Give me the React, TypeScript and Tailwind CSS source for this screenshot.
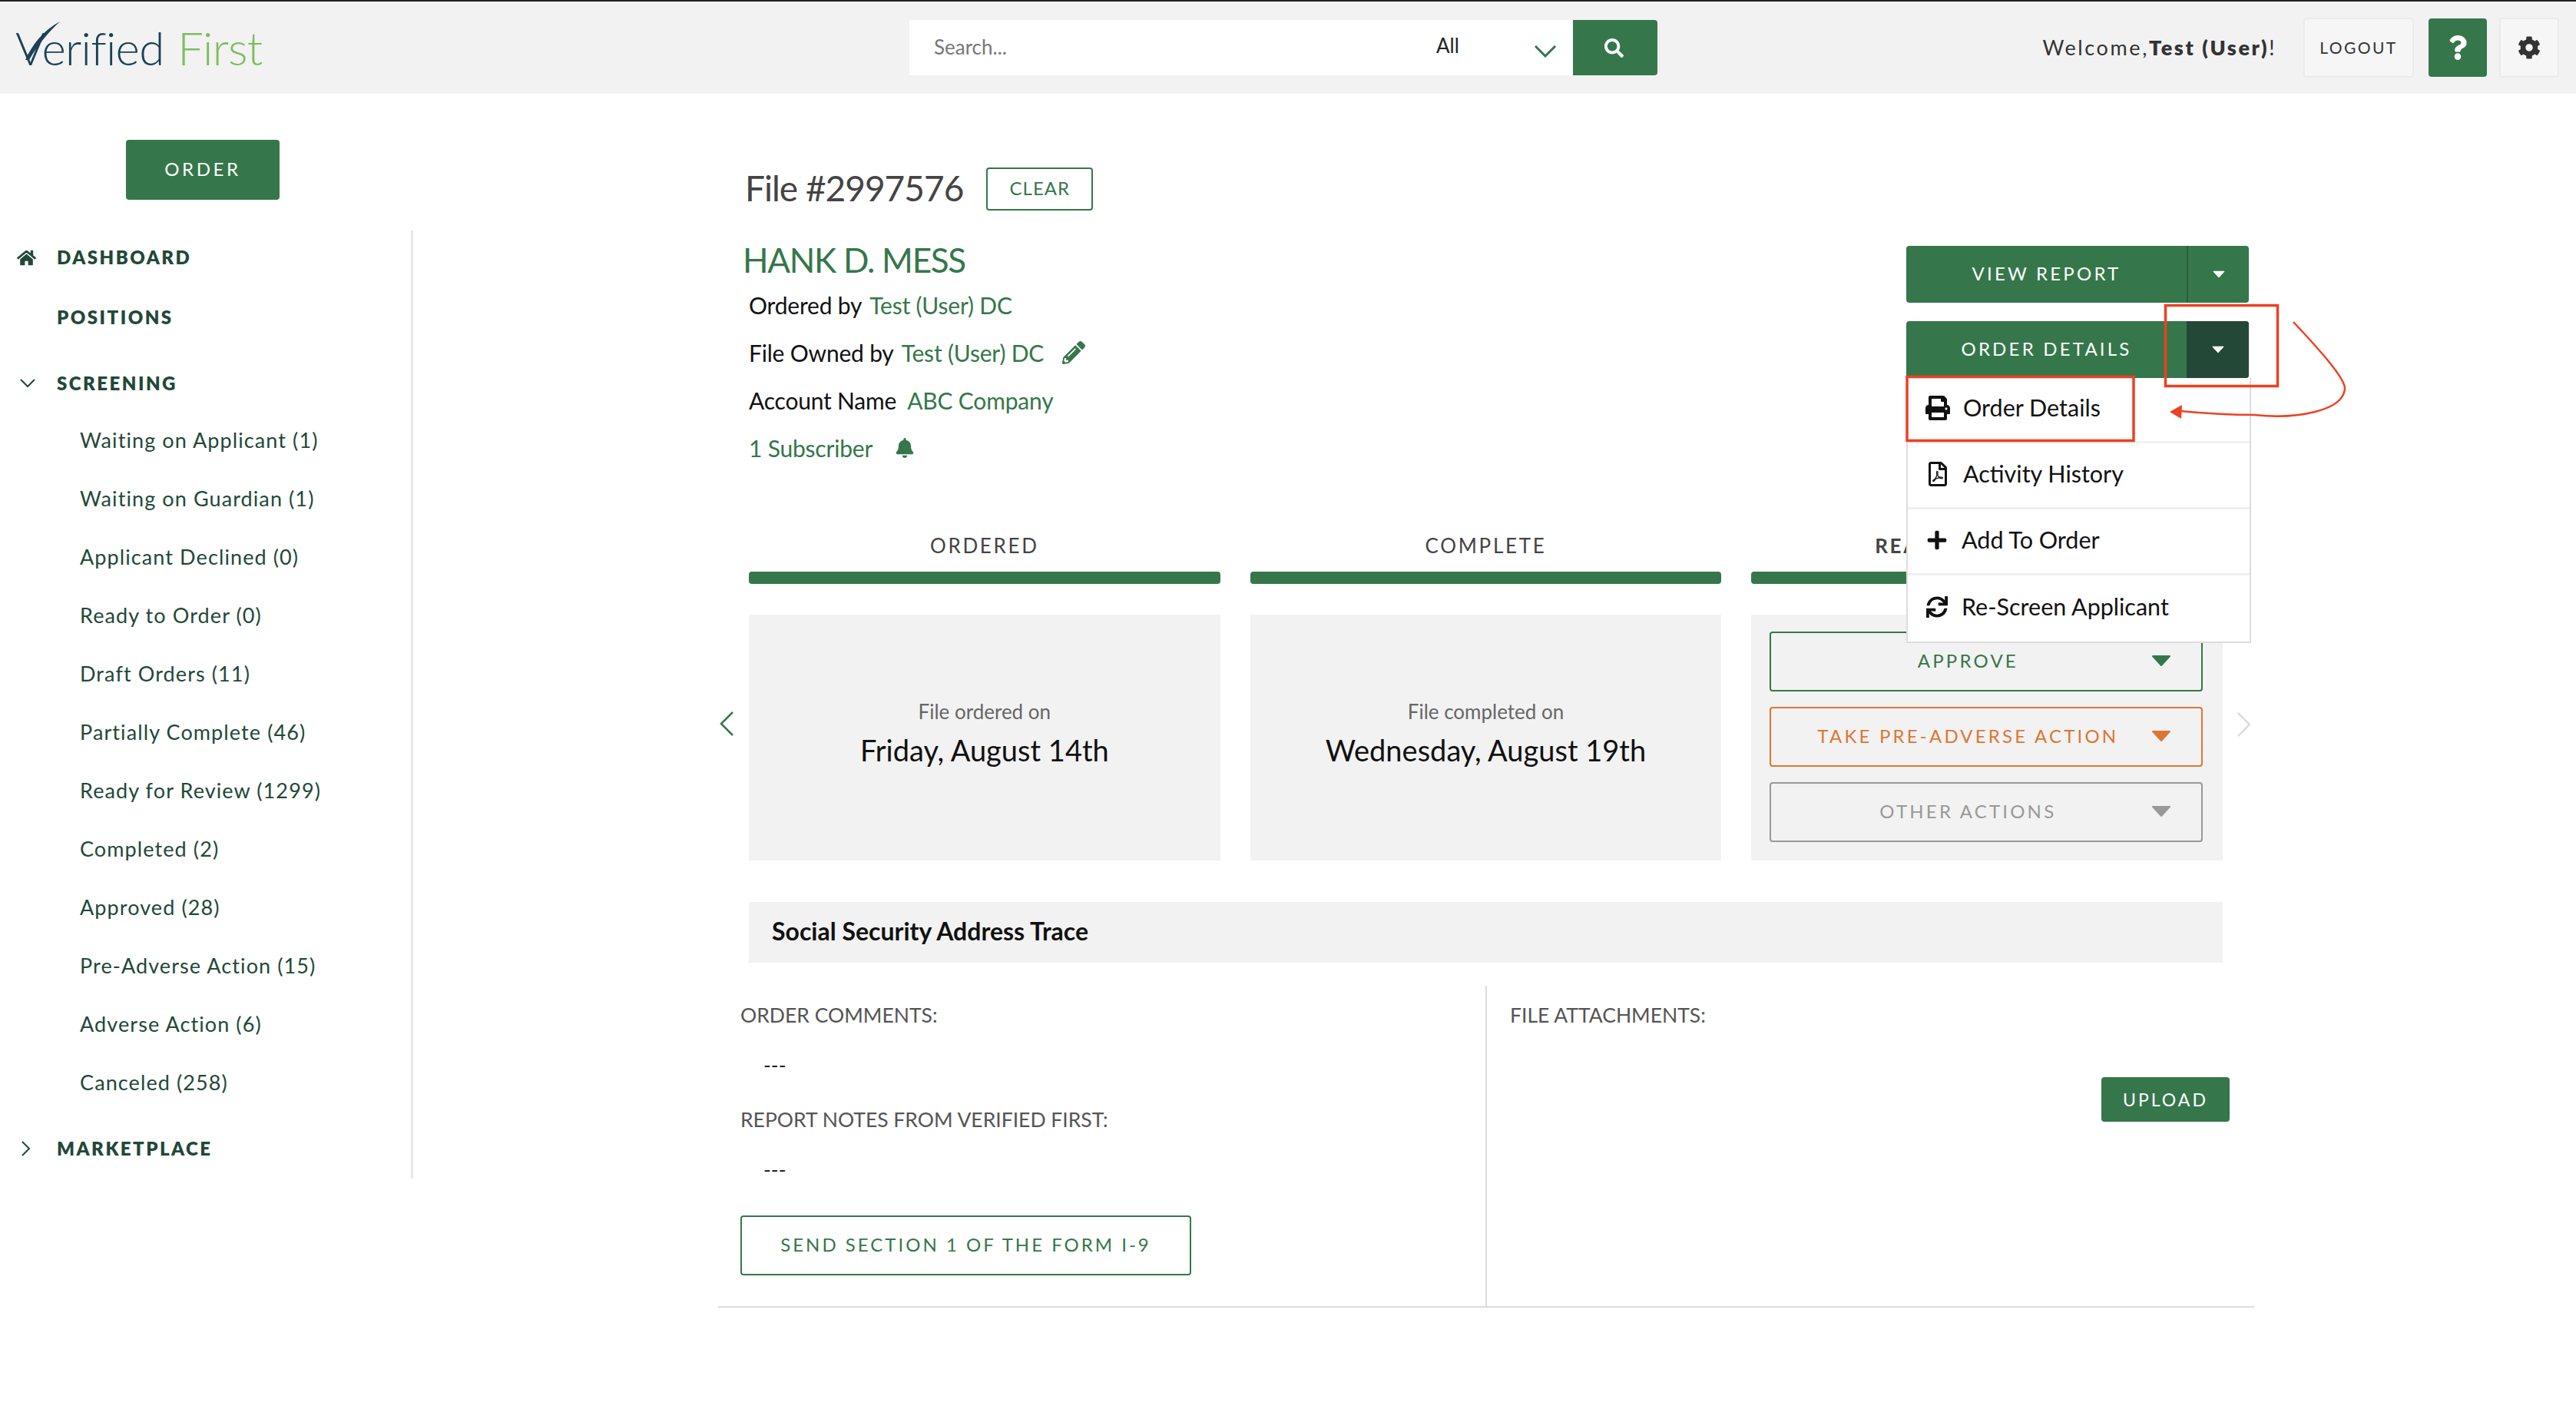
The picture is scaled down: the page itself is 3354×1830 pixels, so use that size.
import { FaBell, FaCog, FaHome, FaPencilAlt, FaPlus, FaPrint, FaQuestion, FaRegFilePdf, FaSearch, FaSync } from 'react-icons/fa'

const screening = [
  'Waiting on Applicant (1)',
  'Waiting on Guardian (1)',
  'Applicant Declined (0)',
  'Ready to Order (0)',
  'Draft Orders (11)',
  'Partially Complete (46)',
  'Ready for Review (1299)',
  'Completed (2)',
  'Approved (28)',
  'Pre-Adverse Action (15)',
  'Adverse Action (6)',
  'Canceled (258)',
]

function Caret({ className }: { className: string }) {
  return (
    <svg viewBox="0 0 26 16" className={className} fill="currentColor" stroke="currentColor" strokeWidth="2" strokeLinejoin="round">
      <path d="M2 2h22L13 14z" />
    </svg>
  )
}

function Header() {
  return (
    <header className="flex h-[122px] items-center border-t-2 border-[#222222] bg-[#f2f2f2]">
      <div className="relative w-[1184px] pl-[20px]">
        <span className="text-[60px] leading-none font-light tracking-[-0.7px] text-[#1a4158]">
          Verified <span className="ml-[2px] text-[#7dbd5f]">First</span>
        </span>
        <svg viewBox="0 0 60 50" className="absolute top-[-4px] left-[26px] h-[50px] w-[60px]">
          <path d="M7 50C16 30 30 12 52 0 36 15 22 32 12 50z" fill="#1a4158" />
        </svg>
      </div>
      <div className="flex h-[72px] w-[974px] items-stretch">
        <div className="flex w-[864px] items-center bg-white pr-[22px] pl-[32px]">
          <span className="mb-[2px] flex-1 text-[26px] text-[#777777]">Search...</span>
          <span className="mb-[6px] w-[128px] text-[26px] text-[#222222]">All</span>
          <svg viewBox="0 0 28 16" className="mt-[10px] h-[16px] w-[28px]" fill="none" stroke="#35774a" strokeWidth="3">
            <path d="M1 1l13 13L27 1" />
          </svg>
        </div>
        <button className="flex w-[110px] items-center justify-center rounded-r-[4px] bg-[#35774a] pr-[4px] text-white">
          <FaSearch className="size-[25px]" />
        </button>
      </div>
      <span className="ml-auto text-[27px] tracking-[2.6px] text-[#333333]">
        Welcome,<b className="font-extrabold">Test (User)</b>!
      </span>
      <div className="mr-[22px] ml-[35px] flex items-center">
        <button className="h-[78px] w-[144px] rounded-[4px] border-2 border-[#ebebeb] bg-[#f6f6f6] text-[21px] tracking-[2.4px] text-[#333333]">
          LOGOUT
        </button>
        <button className="ml-[19px] flex h-[76px] w-[76px] items-center justify-center rounded-[4px] bg-[#35774a] text-white">
          <FaQuestion className="size-[32px]" />
        </button>
        <button className="ml-[16px] flex h-[78px] w-[78px] items-center justify-center rounded-[4px] border-2 border-[#ebebeb] bg-[#f6f6f6] text-[#333333]">
          <FaCog className="size-[30px]" />
        </button>
      </div>
    </header>
  )
}

function Sidebar() {
  return (
    <aside className="w-[538px] shrink-0">
      <button className="mt-[60px] ml-[164px] h-[78px] w-[200px] rounded-[4px] bg-[#35774a] pb-[3px] text-[24px] tracking-[3.6px] text-white">
        ORDER
      </button>
      <nav className="mt-[40px] border-r-[3px] border-[#e8e8e8] pt-[15px] pb-[19px] text-[#224838]">
        <div className="flex h-[40px] items-center text-[24px] font-extrabold tracking-[2.5px]">
          <span className="w-[74px] pl-[22px]">
            <FaHome className="size-[25px]" />
          </span>
          DASHBOARD
        </div>
        <div className="mt-[38px] flex h-[40px] items-center pl-[74px] text-[24px] font-extrabold tracking-[2.5px]">POSITIONS</div>
        <div className="mt-[46px] flex h-[40px] items-center text-[24px] font-extrabold tracking-[2.5px]">
          <span className="w-[74px] pl-[26px]">
            <svg viewBox="0 0 20 12" className="h-[12px] w-[20px]" fill="none" stroke="currentColor" strokeWidth="2">
              <path d="M1 1l9 9 9-9" />
            </svg>
          </span>
          SCREENING
        </div>
        <ul className="mt-[16px]">
          {screening.map((item) => (
            <li key={item} className="flex h-[76px] items-center pl-[104px] text-[27px] tracking-[1.1px]">
              {item}
            </li>
          ))}
        </ul>
        <div className="mt-[28px] flex h-[40px] items-center text-[24px] font-extrabold tracking-[2.5px]">
          <span className="w-[74px] pl-[28px]">
            <svg viewBox="0 0 12 20" className="h-[20px] w-[12px]" fill="none" stroke="currentColor" strokeWidth="2">
              <path d="M1 1l9 9-9 9" />
            </svg>
          </span>
          MARKETPLACE
        </div>
      </nav>
    </aside>
  )
}

function ActionMenu() {
  return (
    <div className="absolute top-full left-0 z-10 w-[449px] border-2 border-t-0 border-[#dddddd] bg-white text-[30.5px] tracking-normal text-[#111111]">
      <div className="flex h-[85px] items-center border-b-[3px] border-[#f0f0f0] pb-[4px]">
        <span className="flex w-[72px] justify-center pl-[6px]">
          <FaPrint className="size-[32px]" />
        </span>
        Order Details
      </div>
      <div className="flex h-[86px] items-center border-b-[3px] border-[#f0f0f0] pb-[4px]">
        <span className="flex w-[72px] justify-center pl-[6px]">
          <FaRegFilePdf className="size-[32px]" />
        </span>
        Activity History
      </div>
      <div className="flex h-[86px] items-center border-b-[3px] border-[#f0f0f0] pb-[4px]">
        <span className="flex w-[70px] justify-center pl-[6px]">
          <FaPlus className="size-[28px]" />
        </span>
        Add To Order
      </div>
      <div className="flex h-[86px] items-center pb-[4px]">
        <span className="flex w-[70px] justify-center pl-[6px]">
          <FaSync className="size-[28px]" />
        </span>
        Re-Screen Applicant
      </div>
    </div>
  )
}

function FileSummary() {
  return (
    <div className="mt-[46px] flex justify-between pr-[5px] pl-[42px]">
      <div className="text-[30px] tracking-[-0.2px] text-[#111111]">
        <h2 className="mt-[-4px] ml-[-8px] h-[44px] text-[44px] leading-[44px] tracking-[-1.3px] text-[#35774a]">HANK D. MESS</h2>
        <div className="mt-[6px]">
          <p className="flex h-[62px] items-center gap-[10px]">
            Ordered by <span className="text-[#35774a]">Test (User) DC</span>
          </p>
          <p className="flex h-[62px] items-center gap-[10px]">
            File Owned by <span className="text-[#35774a]">Test (User) DC</span>
            <FaPencilAlt className="ml-[14px] size-[30px] text-[#35774a]" />
          </p>
          <p className="flex h-[62px] items-center gap-[14px]">
            Account Name <span className="text-[#35774a]">ABC Company</span>
          </p>
          <p className="flex h-[62px] items-center gap-[29px] text-[#35774a]">
            1 Subscriber <FaBell className="size-[26px]" />
          </p>
        </div>
      </div>
      <div className="relative h-[172px] w-[446px] text-[24px] tracking-[3.2px] text-white">
        <div className="flex h-[74px] overflow-hidden rounded-[4px] bg-[#35774a]">
          <span className="flex flex-1 items-center justify-center border-r-2 border-[#2a5c3c] pb-[3px]">VIEW REPORT</span>
          <span className="flex w-[79px] items-center justify-center">
            <Caret className="h-[10px] w-[16px]" />
          </span>
        </div>
        <div className="mt-[24px] flex h-[74px] overflow-hidden rounded-[4px] bg-[#35774a]">
          <span className="flex flex-1 items-center justify-center pb-[3px]">ORDER DETAILS</span>
          <span className="flex w-[81px] items-center justify-center bg-[#234837]">
            <Caret className="h-[10px] w-[16px]" />
          </span>
        </div>
        <ActionMenu />
      </div>
    </div>
  )
}

function Stepper() {
  return (
    <div className="mt-[76px] flex">
      <div className="w-[42px] pt-[236px] pl-[3px]">
        <svg viewBox="0 0 20 32" className="h-[32px] w-[20px]" fill="none" stroke="#35774a" strokeWidth="2.5">
          <path d="M18 1L3 16l15 15" />
        </svg>
      </div>
      <div className="grid w-[1919px] grid-cols-3 gap-x-[39px]">
        <div>
          <div className="flex h-[40px] items-center justify-center text-[26px] tracking-[2.7px] text-[#444444]">ORDERED</div>
          <div className="mt-[14px] h-[16px] rounded-[4px] bg-[#35774a]" />
          <div className="mt-[40px] flex h-[320px] flex-col items-center bg-[#f2f2f2] pt-[107px]">
            <span className="text-[26px] text-[#666666]">File ordered on</span>
            <span className="mt-[2px] text-[38px] text-[#111111]">Friday, August 14th</span>
          </div>
        </div>
        <div>
          <div className="flex h-[40px] items-center justify-center text-[26px] tracking-[2.7px] text-[#444444]">COMPLETE</div>
          <div className="mt-[14px] h-[16px] rounded-[4px] bg-[#35774a]" />
          <div className="mt-[40px] flex h-[320px] flex-col items-center bg-[#f2f2f2] pt-[107px]">
            <span className="text-[26px] text-[#666666]">File completed on</span>
            <span className="mt-[2px] text-[38px] text-[#111111]">Wednesday, August 19th</span>
          </div>
        </div>
        <div>
          <div className="flex h-[40px] items-center justify-center text-[26px] font-bold tracking-[2.7px] text-[#444444]">READY FOR REVIEW</div>
          <div className="mt-[14px] h-[16px] rounded-[4px] bg-[#35774a]" />
          <div className="mt-[40px] flex h-[320px] flex-col gap-[20px] bg-[#f2f2f2] pt-[22px] pr-[26px] pl-[24px] text-[24px] tracking-[3.2px]">
            <button className="flex h-[78px] items-center rounded-[4px] border-2 border-[#35774a] pb-[3px] text-[#35774a]">
              <span className="w-[512px] text-center">APPROVE</span>
              <Caret className="ml-[-17px] h-[16px] w-[26px]" />
            </button>
            <button className="flex h-[78px] items-center rounded-[4px] border-2 border-[#dd7733] pb-[3px] text-[#dd7733]">
              <span className="w-[512px] text-center">TAKE PRE-ADVERSE ACTION</span>
              <Caret className="ml-[-17px] h-[16px] w-[26px]" />
            </button>
            <button className="flex h-[78px] items-center rounded-[4px] border-2 border-[#999999] pb-[3px] text-[#999999]">
              <span className="w-[512px] text-center">OTHER ACTIONS</span>
              <Caret className="ml-[-17px] h-[16px] w-[26px]" />
            </button>
          </div>
        </div>
      </div>
      <div className="pt-[237px] pl-[18px]">
        <svg viewBox="0 0 20 32" className="h-[32px] w-[20px]" fill="none" stroke="#dddddd" strokeWidth="2.5">
          <path d="M2 1l15 15L2 31" />
        </svg>
      </div>
    </div>
  )
}

function Details() {
  return (
    <>
      <div className="mt-[54px] ml-[42px] flex h-[79px] w-[1919px] items-center bg-[#f2f2f2] pb-[3px] pl-[30px] text-[32px] font-bold text-[#111111]">
        Social Security Address Trace
      </div>
      <div className="mt-[30px] ml-[2px] grid h-[419px] w-[2000px] grid-cols-[1001px_999px] border-b-2 border-[#dddddd] text-[26.5px] text-[#555555]">
        <div className="border-r-2 border-[#dddddd] pl-[29px]">
          <div className="mt-[19px] flex h-[40px] items-center">ORDER COMMENTS:</div>
          <div className="mt-[25px] flex h-[40px] items-center pl-[30px] text-[#222222]">---</div>
          <div className="mt-[31px] flex h-[40px] items-center">REPORT NOTES FROM VERIFIED FIRST:</div>
          <div className="mt-[25px] flex h-[40px] items-center pl-[30px] text-[#222222]">---</div>
          <button className="mt-[39px] h-[78px] w-[587px] rounded-[4px] border-2 border-[#35774a] pb-[3px] text-[24px] tracking-[3px] text-[#35774a]">
            SEND SECTION 1 OF THE FORM I-9
          </button>
        </div>
        <div className="pr-[32px] pl-[30px]">
          <div className="mt-[19px] flex h-[40px] items-center">FILE ATTACHMENTS:</div>
          <div className="mt-[60px] flex justify-end">
            <button className="h-[58px] w-[167px] rounded-[4px] bg-[#35774a] text-[23px] tracking-[3px] text-white">UPLOAD</button>
          </div>
        </div>
      </div>
    </>
  )
}

export default function App() {
  return (
    <div className="relative h-[1830px] w-[3354px] overflow-hidden bg-white font-['Lato',sans-serif]">
      <Header />
      <div className="flex">
        <Sidebar />
        <main className="ml-[395px] w-[2000px]">
          <div className="mt-[96px] flex h-[56px] items-center pl-[37px]">
            <h1 className="mb-[4px] text-[46px] tracking-[-1px] text-[#444444]">File #2997576</h1>
            <button className="ml-[30px] h-[56px] w-[139px] rounded-[4px] border-2 border-[#35774a] pb-[2px] text-[24px] tracking-[1px] text-[#35774a]">CLEAR</button>
          </div>
          <FileSummary />
          <Stepper />
          <Details />
        </main>
      </div>
      {/* red markup drawn on top of the screenshot */}
      <svg viewBox="0 0 3354 1830" className="pointer-events-none absolute inset-0 z-20 h-[1830px] w-[3354px]" fill="none" stroke="#ee4023">
        <rect x="2819.5" y="397.5" width="146" height="105" strokeWidth="3.5" />
        <rect x="2483" y="490.5" width="295" height="83" strokeWidth="3.5" />
        <path d="M2986 419C3015 450 3052 490 3053 505C3052 535 2990 546 2935 540C2900 540 2870 538 2838 535" strokeWidth="2.5" />
        <path d="M2825 536l16-9-1 18z" fill="#ee4023" stroke="none" />
      </svg>
    </div>
  )
}
